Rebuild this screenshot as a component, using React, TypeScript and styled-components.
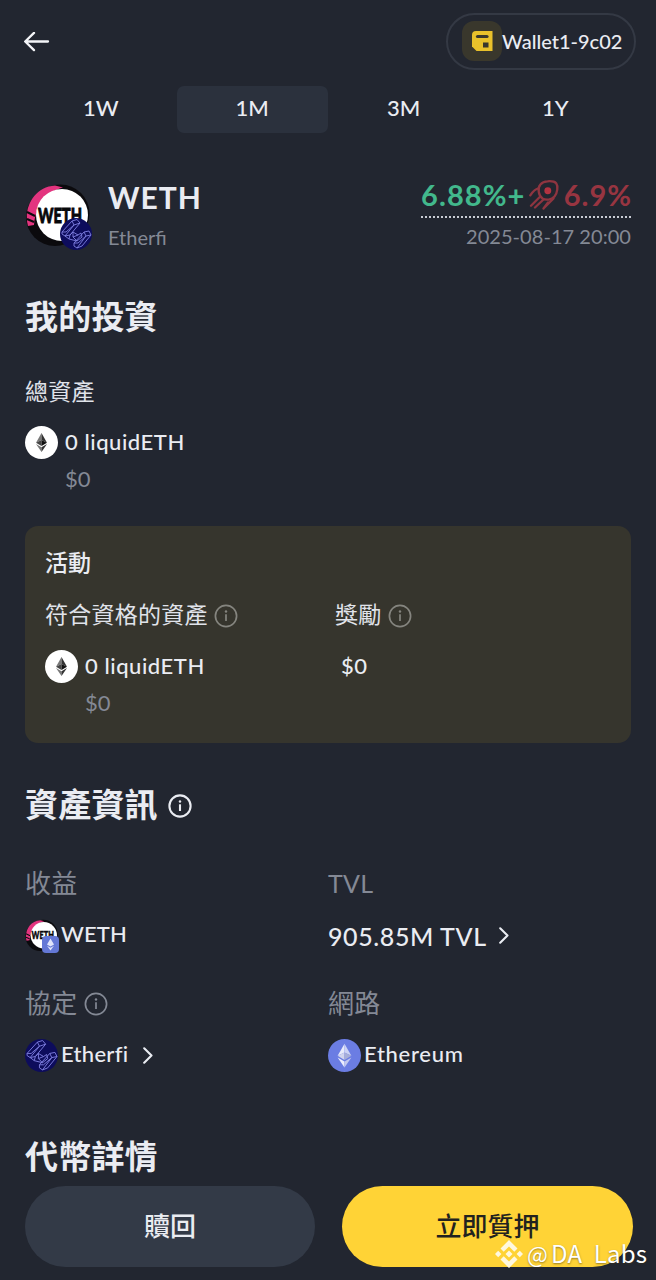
import React from "react";
import styled, { createGlobalStyle } from "styled-components";

const latin = `Lato, "Noto Sans CJK TC", sans-serif`;
const cjk = `"Noto Sans CJK TC", sans-serif`;

const GlobalStyle = createGlobalStyle`
  * { box-sizing: border-box; }
  body { margin: 0; background: #222630; }
  svg { display: block; flex: none; }
`;

const Screen = styled.main`
  position: relative;
  width: 656px;
  height: 1280px;
  overflow: hidden;
  padding: 13px 25px 0;
  background: #222630;
  color: #eaecf2;
  font-family: ${latin};
  white-space: nowrap;
`;

const Header = styled.header`
  display: flex;
  align-items: center;
  justify-content: space-between;
  height: 57px;
  margin: 0 -5px 0 -1px;
`;

const WalletPill = styled.button`
  display: flex;
  align-items: center;
  width: 190px;
  height: 57px;
  padding: 0 0 1px 14px;
  border: 2px solid #343944;
  border-radius: 29px;
  background: transparent;
  color: #eaecf2;
  font: 500 20px/28px ${latin};
`;

const WalletName = styled.span`
  padding-bottom: 1px;
`;

const Tabs = styled.nav`
  display: grid;
  grid-template-columns: repeat(4, 1fr);
  margin-top: 16px;
`;

const Tab = styled.button<{ $active?: boolean }>`
  height: 47px;
  padding: 0 0 3px;
  border: 0;
  border-radius: 7px;
  background: ${(p) => (p.$active ? "#2b313d" : "transparent")};
  color: #eaecf2;
  font: 500 22px/30px ${latin};
`;

const TokenRow = styled.section`
  display: flex;
  height: 65px;
  margin-top: 50px;
`;

const LogoStack = styled.div<{ $size: number }>`
  position: relative;
  flex: none;
  width: ${(p) => p.$size}px;
  height: ${(p) => p.$size}px;
`;

const LogoBadge = styled.div<{ $offset: number }>`
  position: absolute;
  right: ${(p) => p.$offset}px;
  bottom: ${(p) => p.$offset}px;
`;

const TokenName = styled.div`
  flex: 1;
  padding-left: 18px;
`;

const TokenTitle = styled.h1`
  margin: -5px 0 0;
  font: 700 30px/38px ${latin};
  letter-spacing: 1px;
`;

const TokenSub = styled.div`
  margin-top: 9px;
  color: #848995;
  font-size: 20px;
  line-height: 24px;
`;

const RateBlock = styled.div`
  display: flex;
  flex-direction: column;
  align-items: flex-end;
`;

const Rate = styled.div`
  display: flex;
  align-items: center;
  justify-content: space-between;
  width: 210px;
  height: 35px;
  padding-bottom: 10px;
  border-bottom: 2px dotted #c9ccd4;
  color: #42b88c;
  font: 700 29px/30px ${latin};
`;

const Apr = styled.span`
  letter-spacing: 1.1px;
`;

const Bonus = styled.span`
  margin-right: -1px;
  color: #983541;
  letter-spacing: 1px;
`;

const RateDate = styled.div`
  margin-top: 6px;
  color: #848995;
  font-size: 20px;
  line-height: 24px;
  letter-spacing: 0.05px;
`;

const Heading = styled.h2<{ $top: number }>`
  display: flex;
  align-items: center;
  gap: 10px;
  height: 40px;
  margin: ${(p) => p.$top}px 0 0;
  font: 700 33px/36px ${cjk};
  letter-spacing: 0.2px;
`;

const HeadingText = styled.span`
  height: 40px;
`;

const Label = styled.div<{ $top?: number; $size?: number; $muted?: boolean; $latin?: boolean }>`
  display: flex;
  align-items: center;
  gap: 6px;
  height: 30px;
  margin-top: ${(p) => p.$top ?? 0}px;
  color: ${(p) => (p.$muted ? "#848995" : "#e0e3ea")};
  font: 400 ${(p) => p.$size ?? 23}px/27px ${(p) => (p.$latin ? latin : cjk)};
  letter-spacing: 0.25px;
`;

const LabelText = styled.span`
  height: 30px;
`;

const AssetRow = styled.div<{ $top?: number; $gap?: number }>`
  display: flex;
  align-items: center;
  gap: ${(p) => p.$gap ?? 7}px;
  height: 33px;
  margin-top: ${(p) => p.$top ?? 0}px;
  font-size: 22px;
  font-weight: 500;
  line-height: 28px;
`;

const AssetText = styled.span<{ $tracking?: number; $size?: number; $lift?: number }>`
  padding-bottom: ${(p) => p.$lift ?? 1}px;
  font-size: ${(p) => p.$size ?? 22}px;
  letter-spacing: ${(p) => p.$tracking ?? 0.55}px;
`;

const AssetSub = styled.div`
  margin: 8px 0 0 40px;
  color: #848995;
  font-size: 22px;
  line-height: 24px;
  padding-bottom: 1px;
`;

const Card = styled.section`
  height: 217px;
  margin-top: 34px;
  padding: 20px 20px 0;
  border-radius: 13px;
  background: #36352d;
`;

const CardTitle = styled.h3`
  margin: 0;
  font: 500 23px/30px ${cjk};
`;

const CardGrid = styled.div`
  display: grid;
  grid-template-columns: 290px 1fr;
  margin-top: 24px;
`;

const Reward = styled.div`
  margin: 22px 0 0 6px;
  font-size: 22px;
  font-weight: 500;
  line-height: 28px;
  letter-spacing: 0.4px;
`;

const InfoGrid = styled.section`
  display: grid;
  grid-template-columns: 303px 1fr;
  row-gap: 36px;
  margin-top: 43px;
`;

const Footer = styled.footer`
  display: grid;
  grid-template-columns: 290px 291px;
  gap: 27px;
  margin-top: 9px;
`;

const Action = styled.button<{ $primary?: boolean }>`
  height: 81px;
  padding: 0 0 4px;
  border: 0;
  border-radius: 41px;
  background: ${(p) => (p.$primary ? "#ffd336" : "#333a47")};
  color: ${(p) => (p.$primary ? "#22221f" : "#eaecf2")};
  font: 500 26px/36px ${cjk};
`;

const Watermark = styled.div`
  position: absolute;
  left: 495px;
  top: 1235px;
  display: flex;
  align-items: center;
  gap: 4px;
  color: #fff;
  font: 400 24px/36px ${cjk};
  text-shadow: 0 1px 2px rgba(60, 50, 20, 0.55);
`;

const WatermarkText = styled.span`
  padding-bottom: 2px;
  letter-spacing: 0.25px;
`;

const At = styled.span`
  margin-right: 3px;
  font-size: 22px;
`;

const BackIcon = () => (
  <svg width="26" height="20" viewBox="0 0 26 20" fill="none" stroke="#f4f5f8" strokeWidth="2.3" strokeLinecap="round" strokeLinejoin="round">
    <path d="M24 9.500H1.500M10 .9 1.200 9.500 10 18.100" />
  </svg>
);

const WalletIcon = () => (
  <svg width="40" height="40" viewBox="0 0 40 40">
    <rect width="40" height="40" rx="12" fill="#39372c" />
    <path d="M14 10H30.500V30H14.500L10 25.500V14Q10 10 14 10Z" fill="#e9c12b" />
    <path d="M15.500 15.500H25" stroke="#39372c" strokeWidth="3.200" strokeLinecap="round" />
    <rect x="21" y="21.500" width="5.500" height="5" fill="#39372c" />
  </svg>
);

const WethLogo = ({ size }: { size: number }) => (
  <svg width={size} height={size} viewBox="0 0 65 65">
    <circle cx="30" cy="34" r="29" fill="#0b0a0d" />
    <circle cx="35.500" cy="30.500" r="29" fill="#0b0a0d" />
    <path d="M3 43C-2 25 9 4 30 2.500L38 4.500C24 8 11 19 9 42Z" fill="#e3347f" />
    <path d="M2 29 10 33M2 36 9 39" stroke="#0b0a0d" strokeWidth="2" />
    <circle cx="37" cy="32" r="26" fill="#fff" />
    <text x="35" y="40" textAnchor="middle" textLength="44" lengthAdjust="spacingAndGlyphs" fontFamily="Lato, sans-serif" fontWeight="900" fontSize="21" fill="#08080a" stroke="#08080a" strokeWidth="0.900">WETH</text>
  </svg>
);

const EtherfiLogo = ({ size }: { size: number }) => (
  <svg width={size} height={size} viewBox="0 0 32 32">
    <circle cx="16" cy="16" r="16" fill="#0d0c5c" />
    <g fill="none" stroke="#7f80e2" strokeWidth="0.900" strokeLinejoin="round">
      <path d="M2 14 12 3 17 1.500 20 5 10 17 5 18 2 16ZM12 3 14 7 20 5M14 7 5 18M2 14 6 14 14 7" />
      <path d="M10 17 13 14 18 17 21 15 22 19 17 23 9 21ZM13 14 13 19 17 23M13 19 18 17M5 18 9 21" />
      <path d="M14 25 24 14 29 13 31 17 22 28 17 30 14 28ZM24 14 26 18 31 17M26 18 17 30M14 25 18 25 26 18" />
    </g>
  </svg>
);

const EthCoin = ({ blue = false }: { blue?: boolean }) => (
  <svg width="33" height="33" viewBox="0 0 33 33">
    <circle cx="16.500" cy="16.500" r="16.500" fill={blue ? "#6b7de3" : "#fff"} />
    <g transform={blue ? "translate(16.500 16.500) scale(1.250) translate(-16.500 -16.500)" : undefined}>
      <path d="M16.500 7 11 16.700 16.500 14Z" fill={blue ? "#e8ebfb" : "#777"} />
      <path d="M16.500 7 22 16.700 16.500 14Z" fill={blue ? "#cdd3f5" : "#333"} />
      <path d="M11 16.700 16.500 14V20Z" fill={blue ? "#d2d5ee" : "#444"} />
      <path d="M22 16.700 16.500 14V20Z" fill={blue ? "#a7aed8" : "#111"} />
      <path d="M11 18 16.500 21.300V26Z" fill={blue ? "#eceefe" : "#777"} />
      <path d="M22 18 16.500 21.300V26Z" fill={blue ? "#c3c9ef" : "#333"} />
    </g>
  </svg>
);

const EthBadge = () => (
  <svg width="17" height="17" viewBox="0 0 17 17">
    <rect width="17" height="17" rx="4" fill="#6478d6" />
    <path d="M8.500 2.500 12 8.500 8.500 10.500 5 8.500ZM5 9.700 8.500 11.700 12 9.700 8.500 14.500Z" fill="#dfe4fb" />
  </svg>
);

const Rocket = () => (
  <svg width="31" height="32" viewBox="0 0 31 32" fill="none" stroke="#8f3540" strokeWidth="2.300" strokeLinecap="round" strokeLinejoin="round">
    <path d="M9.800 13C8.500 7 12.500 2.500 18.500 2.300Q25 1.800 27.200 4.200C29.300 7 28.500 14 25.500 17.500C22.500 21 17 21.500 13.500 19.500C11.500 18 10.200 16 9.800 13Z" />
    <circle cx="18.800" cy="11.700" r="2.300" fill="#b33341" stroke="#b33341" />
    <path d="M9.800 9.300Q5.500 9.800 1.300 16.300M10.500 18.200 2 26.800M14.500 20.500 6 28.500M24.500 19.500 14.500 29.500M14.500 29.500 19 23.500" />
  </svg>
);

const InfoIcon = ({ color, strong }: { color: string; strong?: boolean }) => (
  <svg width="24" height="26" viewBox="0 0 24 26" fill="none" stroke={color} strokeWidth={strong ? 2.1 : 1.7}>
    <circle cx="12" cy="14" r="10.600" />
    <path d="M12 12.300V19" />
    <circle cx="12" cy="9.500" r="1.200" fill={color} stroke="none" />
  </svg>
);

const Chevron = () => (
  <svg width="10" height="17" viewBox="0 0 10 17" fill="none" stroke="#eaecf2" strokeWidth="2.100" strokeLinecap="round" strokeLinejoin="round">
    <path d="M1.200 1.300 8.500 8.500 1.200 15.700" />
  </svg>
);

const BinanceMark = () => (
  <svg width="28" height="28" viewBox="0 0 28 28" fill="#fff8df">
    <path d="M14 0 22.500 8.500 19.300 11.700 14 6.400 8.700 11.700 5.500 8.500ZM3.200 10.800 6.400 14 3.200 17.200 0 14ZM24.800 10.800 28 14 24.800 17.200 21.600 14ZM14 10.500 17.500 14 14 17.500 10.500 14ZM5.500 19.500 8.700 16.300 14 21.600 19.300 16.300 22.500 19.500 14 28Z" />
  </svg>
);

export default function App() {
  return (
    <Screen>
      <GlobalStyle />
      <Header>
        <BackIcon />
        <WalletPill>
          <WalletIcon />
          <WalletName>Wallet1-9c02</WalletName>
        </WalletPill>
      </Header>
      <Tabs>
        {["1W", "1M", "3M", "1Y"].map((t) => (
          <Tab key={t} $active={t === "1M"}>{t}</Tab>
        ))}
      </Tabs>
      <TokenRow>
        <LogoStack $size={65}>
          <WethLogo size={65} />
          <LogoBadge $offset={-2}><EtherfiLogo size={32} /></LogoBadge>
        </LogoStack>
        <TokenName>
          <TokenTitle>WETH</TokenTitle>
          <TokenSub>Etherfi</TokenSub>
        </TokenName>
        <RateBlock>
          <Rate>
            <Apr>6.88%+</Apr>
            <Rocket />
            <Bonus>6.9%</Bonus>
          </Rate>
          <RateDate>2025-08-17 20:00</RateDate>
        </RateBlock>
      </TokenRow>

      <Heading $top={49}><HeadingText>我的投資</HeadingText></Heading>
      <Label $top={40}><LabelText>總資產</LabelText></Label>
      <AssetRow $top={19}><EthCoin /><AssetText>0 liquidETH</AssetText></AssetRow>
      <AssetSub>$0</AssetSub>

      <Card>
        <CardTitle>活動</CardTitle>
        <CardGrid>
          <div>
            <Label><LabelText>符合資格的資產</LabelText><InfoIcon color="#85857f" /></Label>
            <AssetRow $top={20}><EthCoin /><AssetText>0 liquidETH</AssetText></AssetRow>
            <AssetSub>$0</AssetSub>
          </div>
          <div>
            <Label><LabelText>獎勵</LabelText><InfoIcon color="#85857f" /></Label>
            <Reward>$0</Reward>
          </div>
        </CardGrid>
      </Card>

      <Heading $top={42}><HeadingText>資產資訊</HeadingText><InfoIcon color="#eaecf2" strong /></Heading>
      <InfoGrid>
        <div>
          <Label $size={26} $muted><LabelText>收益</LabelText></Label>
          <AssetRow $top={21} $gap={3}>
            <LogoStack $size={33}>
              <WethLogo size={33} />
              <LogoBadge $offset={-1}><EthBadge /></LogoBadge>
            </LogoStack>
            <AssetText $tracking={0.1} $lift={4}>WETH</AssetText>
          </AssetRow>
        </div>
        <div>
          <Label $size={25} $muted $latin>TVL</Label>
          <AssetRow $top={21} $gap={12}><AssetText $size={25} $tracking={0.6} $lift={0}>905.85M TVL</AssetText><Chevron /></AssetRow>
        </div>
        <div>
          <Label $size={26} $muted><LabelText>協定</LabelText><InfoIcon color="#848995" /></Label>
          <AssetRow $top={21} $gap={3}>
            <EtherfiLogo size={33} />
            <AssetText $tracking={0.3} $lift={3}>Etherfi&nbsp;&nbsp;</AssetText>
            <Chevron />
          </AssetRow>
        </div>
        <div>
          <Label $size={26} $muted><LabelText>網路</LabelText></Label>
          <AssetRow $top={21} $gap={3}><EthCoin blue /><AssetText $tracking={0.7} $lift={3}>Ethereum</AssetText></AssetRow>
        </div>
      </InfoGrid>

      <Heading $top={65}><HeadingText>代幣詳情</HeadingText></Heading>
      <Footer>
        <Action>贖回</Action>
        <Action $primary>立即質押</Action>
      </Footer>
      <Watermark>
        <BinanceMark />
        <WatermarkText><At>@</At>DA&nbsp; Labs</WatermarkText>
      </Watermark>
    </Screen>
  );
}
